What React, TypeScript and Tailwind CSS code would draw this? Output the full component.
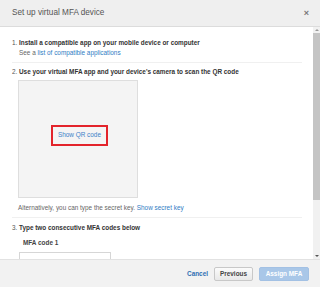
export default function App() {
  return (
    <div className="w-[320px] h-[287px] flex flex-col bg-white overflow-hidden font-['Liberation_Sans',Arial,sans-serif]">
      <header className="h-[27px] shrink-0 flex items-center justify-between pl-[12px] pr-[11px] bg-[#efefef] border-b border-[#dcdcdc]">
        <span className="text-[8.2px] text-[#555]">Set up virtual MFA device</span>
        <span className="text-[9px] font-bold leading-none text-[#777]">×</span>
      </header>

      <div className="flex-1 flex min-h-0">
        <div className="flex-1 pl-[12px] pr-[11px] pt-[11px] overflow-hidden">
          <div className="flex text-[6.4px] leading-[10px] text-[#333]">
            <span className="w-[7px] shrink-0 text-[#555]">1.</span>
            <div>
              <div className="font-bold">Install a compatible app on your mobile device or computer</div>
              <div className="text-[#666]">
                See a <span className="text-[#2f7cc4]">list of compatible applications</span>
              </div>
            </div>
          </div>

          <div className="mt-[4px] h-px bg-[#f0f0f0]" />

          <div className="mt-[4px] flex text-[6.4px] leading-[10px] text-[#333]">
            <span className="w-[7px] shrink-0 text-[#555]">2.</span>
            <div className="flex-1">
              <div className="font-bold">Use your virtual MFA app and your device's camera to scan the QR code</div>
              <div className="mt-[3px] w-[120px] h-[118px] bg-[#f4f4f4] border border-[#dedede] flex items-center justify-center -ml-px">
                <div className="ml-[3px] mt-[-8px] w-[57px] h-[21px] border-2 border-[#e3242b] flex items-center justify-center text-[#3b82c8]">
                  Show QR code
                </div>
              </div>
              <div className="mt-[5px] text-[#666] -ml-px">
                Alternatively, you can type the secret key. <span className="text-[#2f7cc4]">Show secret key</span>
              </div>
            </div>
          </div>

          <div className="mt-[4px] h-px bg-[#f0f0f0]" />

          <div className="mt-[5px] flex text-[6.4px] leading-[10px] text-[#333]">
            <span className="w-[7px] shrink-0 text-[#555]">3.</span>
            <div>
              <div className="font-bold">Type two consecutive MFA codes below</div>
              <div className="mt-[5px] pl-[4px] font-bold text-[#444]">MFA code 1</div>
              <div className="mt-[4px] w-[92px] h-[20px] border border-[#d6d6d6] bg-white" />
            </div>
          </div>
        </div>

        <div className="w-[7px] shrink-0 flex flex-col bg-[#f1f1f1]">
          <div className="h-[6px] flex items-center justify-center">
            <div className="w-0 h-0 border-l-[2px] border-r-[2px] border-b-[2px] border-l-transparent border-r-transparent border-b-[#999]" />
          </div>
          <div className="h-[167px] bg-[#c4c4c4]" />
          <div className="flex-1" />
          <div className="h-[6px] flex items-center justify-center">
            <div className="w-0 h-0 border-l-[2px] border-r-[2px] border-t-[2px] border-l-transparent border-r-transparent border-t-[#555]" />
          </div>
        </div>
      </div>

      <footer className="h-[28px] shrink-0 flex items-center justify-end gap-[6px] pr-[11px] bg-[#f2f2f2] border-t border-[#e2e2e2] text-[6.4px] font-bold">
        <span className="text-[#2f6fb3]">Cancel</span>
        <button className="w-[39px] h-[14px] rounded-[2px] border border-[#c8c8c8] bg-gradient-to-b from-[#fbfbfb] to-[#e8e8e8] text-[#444]">
          Previous
        </button>
        <button className="w-[50px] h-[14px] rounded-[2px] border border-[#a3c1e4] bg-[#a9c7e8] text-white">
          Assign MFA
        </button>
      </footer>
    </div>
  );
}
